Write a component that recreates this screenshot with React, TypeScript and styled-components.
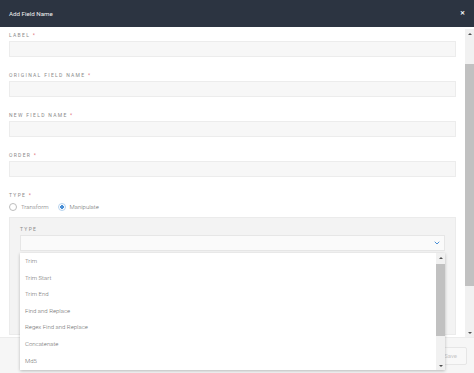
import styled, { createGlobalStyle } from 'styled-components';
import { ChevronDown } from 'lucide-react';

const GlobalStyle = createGlobalStyle`
  html, body {
    margin: 0;
    padding: 0;
    background: #ffffff;
  }
  * {
    box-sizing: border-box;
  }
`;

const OPTIONS = [
  'Trim',
  'Trim Start',
  'Trim End',
  'Find and Replace',
  'Regex Find and Replace',
  'Concatenate',
  'Md5',
];

const FIELDS = ['Label', 'Original Field Name', 'New Field Name', 'Order'];

function App() {
  return (
    <>
      <GlobalStyle />
      <Modal>
        <Header>
          <Title>Add Field Name</Title>
          <Close>✕</Close>
        </Header>
        <Body>
          <Content>
            {FIELDS.map((f) => (
              <Field key={f}>
                <Label>
                  {f} <Req>*</Req>
                </Label>
                <Input />
              </Field>
            ))}
            <Label>
              Type <Req>*</Req>
            </Label>
            <Radios>
              <RadioItem>
                <RadioCircle />
                Transform
              </RadioItem>
              <RadioItem>
                <RadioCircle $checked />
                Manipulate
              </RadioItem>
            </Radios>
            <Panel>
              <Label>Type</Label>
              <Select>
                <ChevronDown size={8} color="#4a8fd6" strokeWidth={3} />
              </Select>
              <List>
                <Options>
                  {OPTIONS.map((o) => (
                    <Option key={o}>{o}</Option>
                  ))}
                </Options>
                <ScrollBar $width={9}>
                  <Arrow $up />
                  <Track $top={2} $bottom={25}>
                    <Thumb />
                  </Track>
                  <Arrow />
                </ScrollBar>
              </List>
            </Panel>
          </Content>
          <ScrollBar $width={9}>
            <Arrow $up />
            <Track $top={26} $bottom={42}>
              <Thumb />
            </Track>
            <Arrow />
          </ScrollBar>
        </Body>
        <Footer>
          <SaveButton disabled>Save</SaveButton>
        </Footer>
      </Modal>
    </>
  );
}

const Modal = styled.div`
  width: 474px;
  height: 373px;
  display: flex;
  flex-direction: column;
  overflow: hidden;
  font-family: Roboto, 'Liberation Sans', sans-serif;
  background: #fff;
`;

const Header = styled.div`
  height: 27px;
  flex: none;
  background: #2c3441;
  display: flex;
  align-items: center;
  justify-content: space-between;
  padding: 0 9px 0 9px;
`;

const Title = styled.div`
  color: #f2f2f2;
  font-size: 6.2px;
  font-weight: 400;
`;

const Close = styled.div`
  color: #ffffff;
  font-size: 6px;
  font-weight: 700;
  line-height: 1;
  margin-top: -2px;
`;

const Body = styled.div`
  height: 310px;
  flex: none;
  display: flex;
  padding-top: 2px;
`;

const Content = styled.div`
  flex: 1;
  padding: 1px 9px 0 9px;
`;

const Field = styled.div`
  margin-bottom: 13px;
`;

const Label = styled.div`
  font-size: 5px;
  line-height: 10px;
  letter-spacing: 1.3px;
  text-transform: uppercase;
  color: #8a8a8a;
  margin-bottom: 1px;
  white-space: nowrap;
`;

const Req = styled.span`
  color: #e0707a;
`;

const Input = styled.div`
  height: 16px;
  background: #f7f7f7;
  border: 1px solid #ececec;
`;

const Radios = styled.div`
  display: flex;
  gap: 9px;
  height: 11px;
  align-items: center;
  margin-bottom: 5px;
`;

const RadioItem = styled.label`
  display: flex;
  align-items: center;
  gap: 4px;
  font-size: 6px;
  font-weight: 300;
  color: #6f6f6f;
`;

const RadioCircle = styled.span<{ $checked?: boolean }>`
  width: 8px;
  height: 8px;
  border-radius: 50%;
  border: 1px solid ${(p) => (p.$checked ? '#b7d3ee' : '#bdbdbd')};
  background: ${(p) =>
    p.$checked ? 'radial-gradient(circle, #4a8fd6 0 1.6px, #fff 2px)' : '#fff'};
`;

const Panel = styled.div`
  position: relative;
  height: 118px;
  background: #f3f3f3;
  border: 1px solid #ebebeb;
  padding: 6px 10px 0 10px;
`;

const Select = styled.div`
  height: 16px;
  margin-top: 1px;
  background: #fafafa;
  border: 1px solid #e6e6e6;
  display: flex;
  align-items: center;
  justify-content: flex-end;
  padding-right: 3px;
`;

const List = styled.div`
  position: absolute;
  z-index: 10;
  top: 35px;
  left: 10px;
  right: 10px;
  height: 117px;
  background: #ffffff;
  display: flex;
  box-shadow: 0 1px 3px rgba(0, 0, 0, 0.25);
`;

const Options = styled.div`
  flex: 1;
`;

const Option = styled.div`
  height: 16.6px;
  line-height: 16.6px;
  padding-left: 5px;
  font-size: 6px;
  font-weight: 300;
  color: #6f6f6f;
`;

const ScrollBar = styled.div<{ $width: number }>`
  width: ${(p) => p.$width}px;
  flex: none;
  display: flex;
  flex-direction: column;
  background: #f1f1f1;
`;

const Arrow = styled.div<{ $up?: boolean }>`
  height: 9px;
  flex: none;
  display: flex;
  align-items: center;
  justify-content: center;
  &::before {
    content: '';
    width: 0;
    height: 0;
    border-left: 2.5px solid transparent;
    border-right: 2.5px solid transparent;
    ${(p) =>
      p.$up ? 'border-bottom: 2.5px solid #505050;' : 'border-top: 2.5px solid #505050;'}
  }
`;

const Track = styled.div<{ $top: number; $bottom: number }>`
  flex: 1;
  display: flex;
  flex-direction: column;
  padding: ${(p) => p.$top}px 0 ${(p) => p.$bottom}px;
`;

const Thumb = styled.div`
  flex: 1;
  background: #c1c1c1;
`;

const Footer = styled.div`
  flex: 1;
  background: #f6f6f6;
  border-top: 1px solid #ececec;
  display: flex;
  align-items: center;
  justify-content: flex-end;
  padding-right: 7px;
`;

const SaveButton = styled.button`
  font-family: Roboto, 'Liberation Sans', sans-serif;
  font-size: 6px;
  color: #c8c8c8;
  background: #f8f8f8;
  border: 1px solid #e6e6e6;
  border-radius: 2px;
  padding: 0 9px;
  height: 18px;
`;

export default App;
